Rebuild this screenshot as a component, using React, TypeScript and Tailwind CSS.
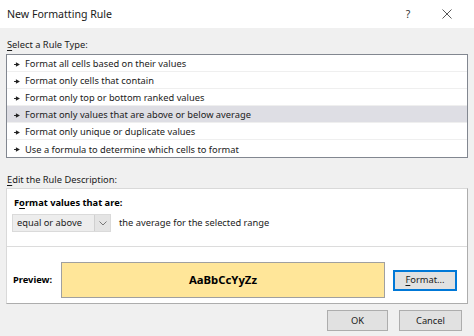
import React from "react";

const items = [
  "Format all cells based on their values",
  "Format only cells that contain",
  "Format only top or bottom ranked values",
  "Format only values that are above or below average",
  "Format only unique or duplicate values",
  "Use a formula to determine which cells to format",
];

export default function App() {
  return (
    <div
      className="w-[474px] h-[336px] bg-[#f0f0f0] flex flex-col text-[9.3px] text-[#1a1a1a] leading-[16px] overflow-hidden whitespace-nowrap"
      style={{ fontFamily: '"Noto Sans", "Open Sans", sans-serif' }}
    >
      {/* Title bar */}
      <div className="h-[28px] bg-white flex items-center shrink-0">
        <div className="pl-[7px] text-[10.6px] text-[#1a1a1a] flex-1">New Formatting Rule</div>
        <div className="w-[20px] text-center text-[10.5px] text-[#333] mr-[23px]">?</div>
        <svg width="12" height="12" viewBox="0 0 12 12" className="mr-[21px]">
          <path d="M1.5 1.5L10.5 10.5M10.5 1.5L1.5 10.5" stroke="#444" strokeWidth="0.9" fill="none" />
        </svg>
      </div>

      <div className="px-[6px] flex flex-col">
        <div className="pt-[9px] pl-[1px]">
          <span className="underline underline-offset-2">S</span>elect a Rule Type:
        </div>
        <div className="mt-[1px] border border-[#828790] bg-white flex flex-col">
          {items.map((t, i) => (
            <div
              key={t}
              className={`h-[17px] flex items-center pl-[6px] pt-[2px] border-b border-[#efefef] last:border-b-0 ${
                i === 3 ? "bg-[#dedee4]" : ""
              }`}
            >
              <svg width="6" height="5" viewBox="0 0 7 6" className="ml-[1px] mr-[5px]">
                <path d="M0 2.3H2.2V0.3L7 3L2.2 5.7V3.7H0Z" fill="#222" />
              </svg>
              <span>{t}</span>
            </div>
          ))}
        </div>

        <div className="mt-[14px] pl-[1px]">
          <span className="underline underline-offset-2">E</span>dit the Rule Description:
        </div>
        <div className="border border-[#adadad] border-l-[#d9d9d9] border-t-[#d9d9d9] bg-white h-[116px] flex flex-col">
          <div className="pt-[6px] pl-[7px] font-bold text-[#000]">
            F<span className="underline underline-offset-2">o</span>rmat values that are:
          </div>
          <div className="mt-[3px] flex items-center pl-[5px]">
            <div className="w-[99px] h-[18px] bg-[#ededed] border border-[#dadada] flex items-center">
              <span className="flex-1 pl-[4px]">equal or above</span>
              <div className="w-[16px] h-full border-l border-[#d0d0d0] bg-[#e4e4e4] flex items-center justify-center">
                <svg width="8" height="5" viewBox="0 0 8 5">
                  <path d="M0.5 0.5L4 4L7.5 0.5" stroke="#777" strokeWidth="1" fill="none" />
                </svg>
              </div>
            </div>
            <span className="ml-[8px]">the average for the selected range</span>
          </div>
          <div className="mt-[14px] h-px bg-[#dcdcdc]" />
          <div className="flex items-center mt-[15px]">
            <div className="w-[54px] pl-[6px] font-bold text-[#000]">Preview:</div>
            <div className="w-[324px] h-[36px] bg-[#ffe699] border border-[#a0a0a0] flex items-center justify-center font-bold text-[11.3px] text-[#000]">
              AaBbCcYyZz
            </div>
            <button className="ml-[8px] w-[64px] h-[21px] bg-[#e1e1e1] border-2 border-[#0078d7] flex items-center justify-center">
              <span>
                <span className="underline underline-offset-2">F</span>ormat...
              </span>
            </button>
          </div>
        </div>
      </div>

      <div className="flex justify-end pr-[12px] mt-[6px] gap-[11px]">
        <button className="w-[61px] h-[21px] bg-[#e1e1e1] border border-[#adadad]">OK</button>
        <button className="w-[63px] h-[21px] bg-[#e1e1e1] border border-[#adadad]">Cancel</button>
      </div>
    </div>
  );
}
